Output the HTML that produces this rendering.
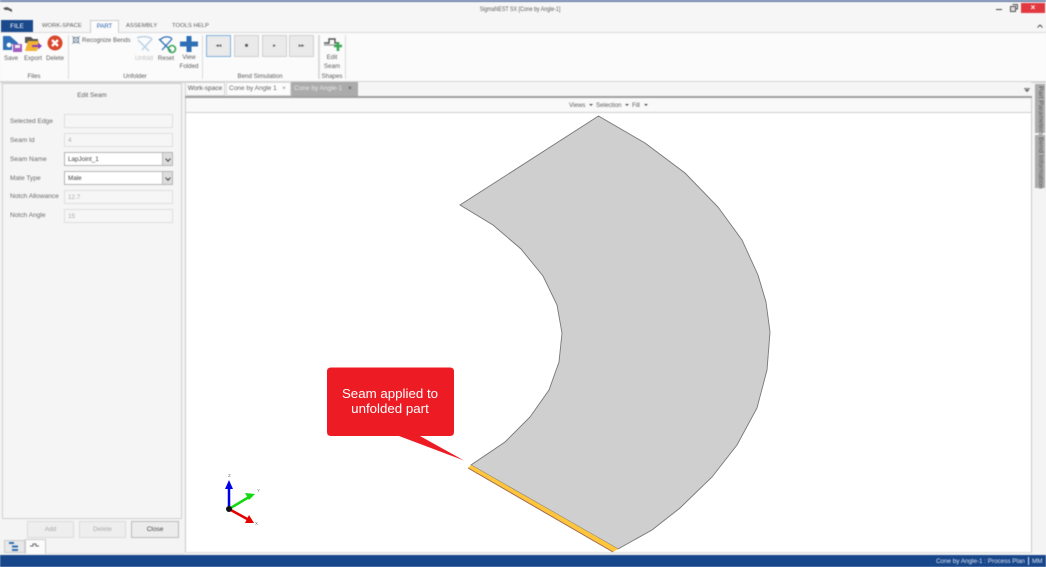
<!DOCTYPE html>
<html><head><meta charset="utf-8"><style>
html,body{margin:0;padding:0;width:1046px;height:567px;overflow:hidden;background:#f4f4f4;font-family:"Liberation Sans",sans-serif;color:#666}
.a{position:absolute}
.t{position:absolute;white-space:nowrap;font-size:6.2px;line-height:9px;color:#5e5e5e}
.c{text-align:center;transform:translateX(-50%)}
#ui{position:absolute;left:0;top:0;width:1046px;height:567px;filter:blur(.4px)}
.sep{position:absolute;top:35px;width:1.5px;height:44px;background:#dcdcdc}
.b{position:absolute;top:35px;width:25px;height:22px;background:#eaeaea;border:1px solid #cfcfcf;box-sizing:border-box;color:#555;font-size:5.5px;line-height:20px;text-align:center}
.i{position:absolute;left:64px;width:109px;height:14px;box-sizing:border-box;border:1px solid #dedede;background:#f6f6f6;font-size:6.3px;line-height:13px;padding-left:3px;color:#aaa}
.s{border-color:#b5b5b5;background:#fff;color:#444}
.s:after{content:"";position:absolute;right:0;top:0;width:9px;height:12px;background:#ddd;border-left:1px solid #bbb}
.s:before{content:"";position:absolute;right:2.500px;top:4px;width:3px;height:3px;border-right:1px solid #444;border-bottom:1px solid #444;transform:rotate(45deg);z-index:1}
.l{position:absolute;left:10px;font-size:6.6px;line-height:9px;color:#6c6c6c;white-space:nowrap}
.fb{position:absolute;top:521px;height:17px;box-sizing:border-box;border:1px solid #dcdcdc;background:#eeeeee;font-size:6.5px;line-height:15px;text-align:center;color:#aaa}
</style></head><body>
<div id="ui">
<div class="a" style="left:0;top:0;width:1046px;height:2px;background:#7186ad"></div>
<div class="a" style="left:0;top:2px;width:1046px;height:30px;background:#f6f6f6"></div>
<svg class="a" style="left:3px;top:6px" width="10" height="7"><path d="M0 2L4 1L9 3.500L9 6L5 4L2 4Z" fill="#555"/></svg>
<div class="t" style="left:520px;top:5px;transform:translateX(-50%) scaleX(.85);color:#5e5e5e">SigmaNEST SX [Cone by Angle-1]</div>
<div class="a" style="left:996px;top:8.500px;width:6px;height:1.500px;background:#444"></div>
<svg class="a" style="left:1010px;top:4px" width="8" height="8"><path d="M2.500 .5H7.500V5H6M.5 2.500H5.500V7.500H.5Z" fill="#ddd" stroke="#555"/></svg>
<div class="a" style="left:1021px;top:3px;width:24px;height:10px;background:#e2383f;color:#fff;font-size:8px;line-height:10px;text-align:center;font-weight:bold">×</div>
<svg class="a" style="left:1037px;top:24px" width="6" height="4"><path d="M.5 3.500L3 1L5.500 3.500" fill="none" stroke="#555"/></svg>
<!-- tabs -->
<div class="a" style="left:1px;top:20px;width:32px;height:12px;background:#1a4a8c;color:#fff;font-size:6.500px;line-height:13px;text-align:center">FILE</div>
<div class="t" style="left:42px;top:22px;font-size:5.900px">WORK-SPACE</div>
<div class="a" style="left:90px;top:20px;width:29px;height:13px;box-sizing:border-box;background:#fcfcfc;border:1px solid #cdcdcd;border-bottom:0;color:#2b62a8;font-size:6px;line-height:12px;text-align:center;z-index:2">PART</div>
<div class="t" style="left:126px;top:22px;font-size:5.900px">ASSEMBLY</div>
<div class="t" style="left:172px;top:22px;font-size:5.900px">TOOLS HELP</div>
<!-- ribbon -->
<div class="a" style="left:0;top:32px;width:1046px;height:48px;background:#fbfbfb;border-top:1px solid #dcdcdc;border-bottom:2px solid #d4d4d4;box-sizing:content-box"></div>
<svg class="a" style="left:3px;top:35px" width="19" height="18"><path d="M0 1H7L15 8V9H9V15H0Z" fill="#2f6fb5"/><circle cx="6" cy="10" r="2.400" fill="#fff"/><rect x="10" y="9" width="9" height="8" fill="#a45cc0"/><rect x="12" y="10" width="5" height="3" fill="#eee"/></svg>
<svg class="a" style="left:24px;top:36px" width="19" height="16"><path d="M1 1H7L9 3H14V7H1Z" fill="#555"/><path d="M1 15L4 5H15L13 15Z" fill="#f2b233"/><path d="M8 9H14V6.500L18 10L14 13.500V11H8Z" fill="#8a3fb5"/></svg>
<svg class="a" style="left:47px;top:35px" width="16" height="16"><circle cx="8" cy="8" r="7.500" fill="#d9472b"/><path d="M5 5L11 11M11 5L5 11" stroke="#fff" stroke-width="2.400"/></svg>
<div class="t c" style="left:11px;top:54px">Save</div>
<div class="t c" style="left:33px;top:54px">Export</div>
<div class="t c" style="left:55px;top:54px">Delete</div>
<div class="t c" style="left:34px;top:72px">Files</div>
<div class="sep" style="left:67.500px"></div>
<svg class="a" style="left:72px;top:36px" width="8" height="8"><rect x="1.500" y="1.500" width="5" height="5" fill="none" stroke="#6d8fb0"/><path d="M0 0L8 8M8 0L0 8" stroke="#777" stroke-width=".6"/></svg>
<div class="t" style="left:82px;top:35.500px">Recognize Bends</div>
<svg class="a" style="left:136px;top:36px" width="18" height="17"><path d="M1 2C5 0 12 0 16 3M2 4L13 15M16 3L6 14" fill="none" stroke="#bcd2e4" stroke-width="1.500"/></svg>
<div class="t c" style="left:144px;top:54px;color:#bdbdbd">Unfold</div>
<svg class="a" style="left:158px;top:36px" width="19" height="18"><path d="M2 4C5 0 12 0 14 3M1 3L13 15M14 3L4 14" fill="none" stroke="#2f6fb5" stroke-width="1.300"/><circle cx="14" cy="13" r="3.500" fill="none" stroke="#3aa655" stroke-width="1.600"/></svg>
<div class="t c" style="left:166px;top:54px">Reset</div>
<svg class="a" style="left:180px;top:36px" width="18" height="16"><path d="M6.500 0H11.500V5.500H18V10.500H11.500V16H6.500V10.500H0V5.500H6.500Z" fill="#2f6fb5"/></svg>
<div class="t c" style="left:189px;top:54px;line-height:8.500px">View<br>Folded</div>
<div class="t c" style="left:135px;top:72px">Unfolder</div>
<div class="sep" style="left:201.500px"></div>
<div class="b" style="left:206px;border-color:#7fb0dd">◂◂</div>
<div class="b" style="left:234px">■</div>
<div class="b" style="left:262px">▸</div>
<div class="b" style="left:289px">▸▸</div>
<div class="t c" style="left:260px;top:72px">Bend Simulation</div>
<div class="sep" style="left:318px"></div>
<svg class="a" style="left:324px;top:37px" width="18" height="15"><path d="M0 6H5V2H11V6H15" fill="none" stroke="#555" stroke-width="1.400"/><path d="M0 8H14" stroke="#888"/><path d="M10 9H18M14 5V14" stroke="#3aa655" stroke-width="2.600"/></svg>
<div class="t c" style="left:332px;top:54px;line-height:8.500px">Edit<br>Seam</div>
<div class="t c" style="left:332px;top:72px">Shapes</div>
<div class="sep" style="left:344.500px"></div>
<!-- left panel -->
<div class="a" style="left:2px;top:83px;width:180px;height:436px;box-sizing:border-box;border:1px solid #d0d0d0;background:#f5f5f5"></div>
<div class="t c" style="left:92px;top:90.500px;font-size:6.400px">Edit Seam</div>
<div class="l" style="top:117px">Selected Edge</div><div class="i" style="top:114px"></div>
<div class="l" style="top:136px">Seam Id</div><div class="i" style="top:133px">4</div>
<div class="l" style="top:155px">Seam Name</div><div class="i s" style="top:152px">LapJoint_1</div>
<div class="l" style="top:174px">Mate Type</div><div class="i s" style="top:171px">Male</div>
<div class="l" style="top:192px">Notch Allowance</div><div class="i" style="top:190px">12.7</div>
<div class="l" style="top:211px">Notch Angle</div><div class="i" style="top:209px">15</div>
<div class="fb" style="left:27px;width:47px">Add</div>
<div class="fb" style="left:79px;width:47px">Delete</div>
<div class="fb" style="left:131px;width:48px;border-color:#bbb;color:#444;background:#ececec">Close</div>
<!-- bottom tabs -->
<div class="a" style="left:4px;top:540px;width:21px;height:13px;box-sizing:border-box;background:#e8e8e8;border:1px solid #ccc"></div>
<svg class="a" style="left:9px;top:542px" width="10" height="10"><path d="M0 0H5V2H0ZM3 3.500H9V5.500H3ZM3 7H9V9H3Z" fill="#2f6fb5"/></svg>
<div class="a" style="left:25px;top:539px;width:21px;height:15px;box-sizing:border-box;background:#fbfbfb;border:1px solid #ccc;border-bottom:0"></div>
<svg class="a" style="left:30px;top:543px" width="10" height="4"><path d="M0 3H3V1H6V3H9" fill="none" stroke="#666"/></svg>
<div class="a" style="left:46px;top:553px;width:139px;height:1px;background:#e6e6e6"></div>
<!-- doc tabs -->
<div class="a" style="left:185px;top:82px;width:846px;height:14px;background:#f5f5f5"></div>
<div class="a" style="left:185px;top:82px;width:40px;height:14px;box-sizing:border-box;background:#f9f9f9;border:1px solid #d5d5d5;font-size:6.500px;line-height:12px;text-align:center;color:#555;white-space:nowrap">Work-space</div>
<div class="a" style="left:226px;top:82px;width:65px;height:14px;box-sizing:border-box;background:#fcfcfc;border:1px solid #ddd;font-size:6.500px;line-height:12px;padding-left:2px;color:#666;white-space:nowrap">Cone by Angle 1<span style="position:absolute;left:55px;color:#888">×</span></div>
<div class="a" style="left:291px;top:82px;width:67px;height:14px;background:#ababab;font-size:6.500px;line-height:14px;padding-left:3px;box-sizing:border-box;color:#e6e6e6;white-space:nowrap">Cone by Angle-1<span style="position:absolute;left:57px;color:#444">×</span></div>
<svg class="a" style="left:1024px;top:88px" width="7" height="4"><path d="M0 .5H6M1 1.500L3 3.500L5 1.500" stroke="#555" fill="#555" stroke-width=".8"/></svg>
<div class="a" style="left:185px;top:96px;width:847px;height:2px;background:#9f9f9f"></div>
<!-- viewport -->
<div class="a" style="left:185px;top:98px;width:847px;height:455px;box-sizing:border-box;background:#fff;border-left:1px solid #ccc;border-right:1px solid #ccc;border-bottom:1px solid #ddd"></div>
<div class="a" style="left:186px;top:98px;width:845px;height:14px;background:#f9f9f9;border-bottom:1px solid #cfcfcf"></div>
<div class="t" style="left:569px;top:101px">Views</div><div class="a" style="left:589px;top:104px;width:0;height:0;border:2px solid transparent;border-top:2px solid #555"></div>
<div class="t" style="left:596px;top:101px">Selection</div><div class="a" style="left:625px;top:104px;width:0;height:0;border:2px solid transparent;border-top:2px solid #555"></div>
<div class="t" style="left:632px;top:101px">Fill</div><div class="a" style="left:644px;top:104px;width:0;height:0;border:2px solid transparent;border-top:2px solid #555"></div>
<!-- right side tabs -->
<div class="a" style="left:1035px;top:84px;width:10px;height:49px;background:#ababab"></div>
<div class="a" style="left:1035px;top:135px;width:10px;height:53px;background:#ababab"></div>
<div class="t" style="left:1036px;top:86px;writing-mode:vertical-rl;font-size:6.800px;line-height:8px;color:#5c5c5c">Part Parameters</div>
<div class="t" style="left:1036px;top:137px;writing-mode:vertical-rl;font-size:6.800px;line-height:8px;color:#5c5c5c">Bend Information</div>
<!-- status -->
<div class="a" style="left:0;top:555px;width:1046px;height:12px;background:#17468a"></div>
<div class="t" style="left:936px;top:557px;color:#dbe4f2;font-size:6.300px">Cone by Angle-1 : Process Plan</div>
<div class="a" style="left:1028px;top:557px;width:1px;height:8px;background:#dbe4f2"></div>
<div class="t" style="left:1032px;top:557px;color:#dbe4f2;font-size:6.300px">MM</div>
</div>
<!-- drawing -->
<svg class="a" style="left:0;top:0;filter:blur(.2px)" width="1046" height="567">
<polygon points="598.500,116 645,143 685,173 718,207 742,240 758,275 766,302 770,332 767,370 757,408 737,445 712,477 680,508 652,530 618,549 471,465 505,442 530,417 549,390 559,362 562,333 557,305 543,276 521,249 493,225 460,205" fill="#cfcfcf" stroke="#777" stroke-width=".9"/>
<polygon points="471,465 618,549 613,552 468,468" fill="#ffc63c"/>
<path d="M468 468L613 552" stroke="#a0684f" stroke-width="1"/>
<path d="M229 509V485" stroke="#0000e6" stroke-width="2.500"/><path d="M225 489L229 480L233 489Z" fill="#0000e6"/>
<path d="M229 509L249 497" stroke="#12d912" stroke-width="2.500"/><path d="M245 493L255 494L249 500Z" fill="#12d912"/>
<path d="M229 509L249 520" stroke="#e60000" stroke-width="2.500"/><path d="M245 523L254 523L249 515Z" fill="#e60000"/>
<circle cx="229" cy="509" r="3" fill="#111"/>
<text x="228" y="477" font-family="Liberation Sans" font-size="4.500" fill="#777">Z</text>
<text x="257" y="492" font-family="Liberation Sans" font-size="4.500" fill="#777">Y</text>
<text x="255" y="525" font-family="Liberation Sans" font-size="4.500" fill="#777">X</text>
<path d="M331 367.500H450Q454 367.500 454 371.500V432Q454 436 450 436H420L464 460.500L399 436H331Q327 436 327 432V371.500Q327 367.500 331 367.500Z" fill="#ed1c24"/>
<text x="390" y="398" text-anchor="middle" font-family="Liberation Sans" font-size="13.300" fill="#fff">Seam applied to</text>
<text x="390" y="413" text-anchor="middle" font-family="Liberation Sans" font-size="13.300" fill="#fff">unfolded part</text>
</svg>
</body></html>
